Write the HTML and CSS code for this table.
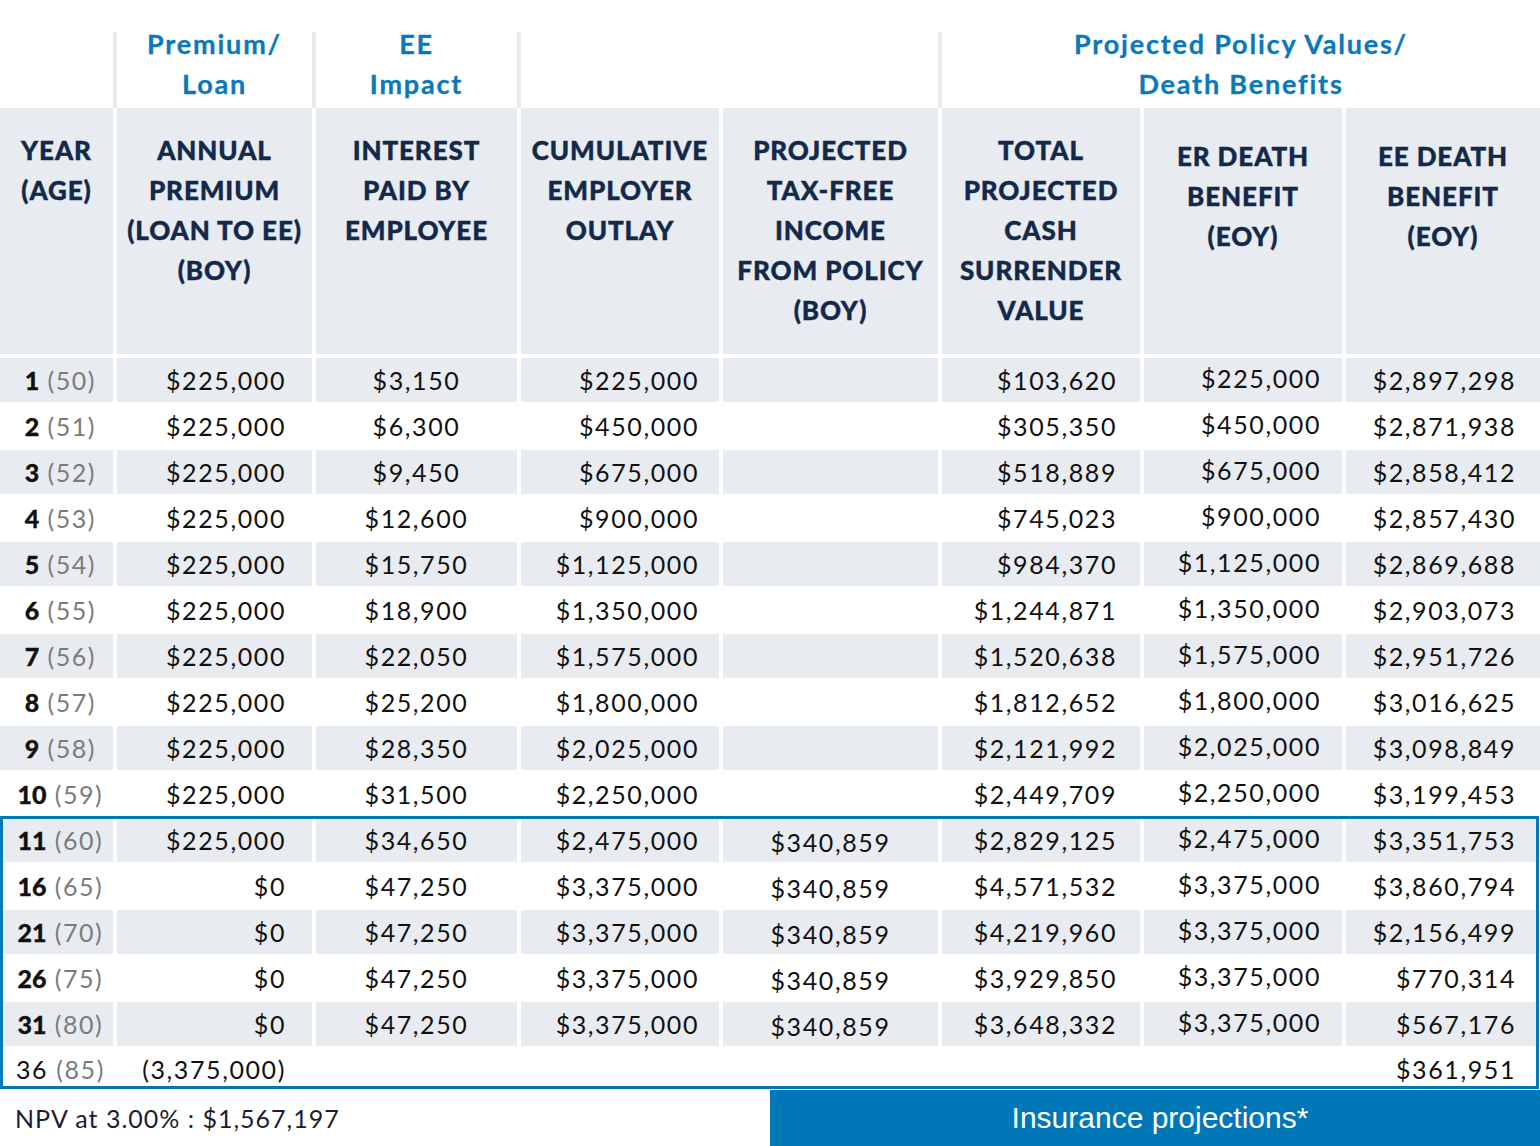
FILE: index.html
```html
<!DOCTYPE html>
<html lang="en">
<head>
<meta charset="utf-8">
<title>Insurance projections</title>
<link rel="stylesheet" href="styles.css">
</head>
<body>
<div class="sheet">
  <div class="grid group">
    <div class="gcell"></div>
    <div class="gcell"><span class="gtext">Premium/<br>Loan</span></div>
    <div class="gcell"><span class="gtext">EE<br>Impact</span></div>
    <div class="gcell span45"></div>
    <div class="gcell span68"><span class="gtext">Projected Policy Values/<br>Death Benefits</span></div>
  </div>
  <div class="grid head">
    <div class="hcell">YEAR<br>(AGE)</div>
    <div class="hcell">ANNUAL<br>PREMIUM<br>(LOAN TO EE)<br>(BOY)</div>
    <div class="hcell">INTEREST<br>PAID BY<br>EMPLOYEE</div>
    <div class="hcell">CUMULATIVE<br>EMPLOYER<br>OUTLAY</div>
    <div class="hcell">PROJECTED<br>TAX-FREE<br>INCOME<br>FROM POLICY<br>(BOY)</div>
    <div class="hcell">TOTAL<br>PROJECTED<br>CASH<br>SURRENDER<br>VALUE</div>
    <div class="hcell lower">ER DEATH<br>BENEFIT<br>(EOY)</div>
    <div class="hcell lower">EE DEATH<br>BENEFIT<br>(EOY)</div>
  </div>
  <div class="rows">
    <div class="grid row shade"><div class="c1"><b>1</b>&nbsp;<span class="age">(50)</span></div><div class="c2">$225,000</div><div class="c3">$3,150</div><div class="c4">$225,000</div><div class="c5"></div><div class="c6">$103,620</div><div class="c7">$225,000</div><div class="c8">$2,897,298</div></div>
    <div class="grid row"><div class="c1"><b>2</b>&nbsp;<span class="age">(51)</span></div><div class="c2">$225,000</div><div class="c3">$6,300</div><div class="c4">$450,000</div><div class="c5"></div><div class="c6">$305,350</div><div class="c7">$450,000</div><div class="c8">$2,871,938</div></div>
    <div class="grid row shade"><div class="c1"><b>3</b>&nbsp;<span class="age">(52)</span></div><div class="c2">$225,000</div><div class="c3">$9,450</div><div class="c4">$675,000</div><div class="c5"></div><div class="c6">$518,889</div><div class="c7">$675,000</div><div class="c8">$2,858,412</div></div>
    <div class="grid row"><div class="c1"><b>4</b>&nbsp;<span class="age">(53)</span></div><div class="c2">$225,000</div><div class="c3">$12,600</div><div class="c4">$900,000</div><div class="c5"></div><div class="c6">$745,023</div><div class="c7">$900,000</div><div class="c8">$2,857,430</div></div>
    <div class="grid row shade"><div class="c1"><b>5</b>&nbsp;<span class="age">(54)</span></div><div class="c2">$225,000</div><div class="c3">$15,750</div><div class="c4">$1,125,000</div><div class="c5"></div><div class="c6">$984,370</div><div class="c7">$1,125,000</div><div class="c8">$2,869,688</div></div>
    <div class="grid row"><div class="c1"><b>6</b>&nbsp;<span class="age">(55)</span></div><div class="c2">$225,000</div><div class="c3">$18,900</div><div class="c4">$1,350,000</div><div class="c5"></div><div class="c6">$1,244,871</div><div class="c7">$1,350,000</div><div class="c8">$2,903,073</div></div>
    <div class="grid row shade"><div class="c1"><b>7</b>&nbsp;<span class="age">(56)</span></div><div class="c2">$225,000</div><div class="c3">$22,050</div><div class="c4">$1,575,000</div><div class="c5"></div><div class="c6">$1,520,638</div><div class="c7">$1,575,000</div><div class="c8">$2,951,726</div></div>
    <div class="grid row"><div class="c1"><b>8</b>&nbsp;<span class="age">(57)</span></div><div class="c2">$225,000</div><div class="c3">$25,200</div><div class="c4">$1,800,000</div><div class="c5"></div><div class="c6">$1,812,652</div><div class="c7">$1,800,000</div><div class="c8">$3,016,625</div></div>
    <div class="grid row shade"><div class="c1"><b>9</b>&nbsp;<span class="age">(58)</span></div><div class="c2">$225,000</div><div class="c3">$28,350</div><div class="c4">$2,025,000</div><div class="c5"></div><div class="c6">$2,121,992</div><div class="c7">$2,025,000</div><div class="c8">$3,098,849</div></div>
    <div class="grid row"><div class="c1"><b>10</b>&nbsp;<span class="age">(59)</span></div><div class="c2">$225,000</div><div class="c3">$31,500</div><div class="c4">$2,250,000</div><div class="c5"></div><div class="c6">$2,449,709</div><div class="c7">$2,250,000</div><div class="c8">$3,199,453</div></div>
    <div class="boxed">
      <div class="grid row shade"><div class="c1"><b>11</b>&nbsp;<span class="age">(60)</span></div><div class="c2">$225,000</div><div class="c3">$34,650</div><div class="c4">$2,475,000</div><div class="c5">$340,859</div><div class="c6">$2,829,125</div><div class="c7">$2,475,000</div><div class="c8">$3,351,753</div></div>
      <div class="grid row"><div class="c1"><b>16</b>&nbsp;<span class="age">(65)</span></div><div class="c2">$0</div><div class="c3">$47,250</div><div class="c4">$3,375,000</div><div class="c5">$340,859</div><div class="c6">$4,571,532</div><div class="c7">$3,375,000</div><div class="c8">$3,860,794</div></div>
      <div class="grid row shade"><div class="c1"><b>21</b>&nbsp;<span class="age">(70)</span></div><div class="c2">$0</div><div class="c3">$47,250</div><div class="c4">$3,375,000</div><div class="c5">$340,859</div><div class="c6">$4,219,960</div><div class="c7">$3,375,000</div><div class="c8">$2,156,499</div></div>
      <div class="grid row"><div class="c1"><b>26</b>&nbsp;<span class="age">(75)</span></div><div class="c2">$0</div><div class="c3">$47,250</div><div class="c4">$3,375,000</div><div class="c5">$340,859</div><div class="c6">$3,929,850</div><div class="c7">$3,375,000</div><div class="c8">$770,314</div></div>
      <div class="grid row shade"><div class="c1"><b>31</b>&nbsp;<span class="age">(80)</span></div><div class="c2">$0</div><div class="c3">$47,250</div><div class="c4">$3,375,000</div><div class="c5">$340,859</div><div class="c6">$3,648,332</div><div class="c7">$3,375,000</div><div class="c8">$567,176</div></div>
      <div class="grid row last"><div class="c1">36&nbsp;<span class="age">(85)</span></div><div class="c2">(3,375,000)</div><div class="c3"></div><div class="c4"></div><div class="c5"></div><div class="c6"></div><div class="c7"></div><div class="c8">$361,951</div></div>
    </div>
  </div>
  <div class="foot">
    <div class="npv">NPV at 3.00% : $1,567,197</div>
    <div class="ins">Insurance projections*</div>
  </div>
</div>
</body>
</html>
```
FILE: styles.css
```css
html, body {
  margin: 0;
  padding: 0;
  background: #ffffff;
}
body {
  font-family: Lato, "Noto Sans", sans-serif;
  color: #111111;
}
.sheet {
  width: 1540px;
  overflow: hidden;
  height: 1146px;
}
.grid {
  display: grid;
  grid-template-columns: 113px 195px 201px 198px 215px 198px 198px 194px;
  column-gap: 4px;
}
/* group header */
.group {
  margin-top: 32px;
  height: 76px;
  background: #e8ebef;
}
.gcell {
  background: #ffffff;
  color: #0a79b9;
  font-weight: 700;
  font-size: 27px;
  line-height: 40px;
  text-align: center;
  letter-spacing: 1.8px;
  -webkit-text-stroke: 0.3px currentColor;
}
.gtext {
  display: block;
  margin-top: -8px;
}
.span45 { grid-column: 4 / span 2; }
.span68 { grid-column: 6 / span 3; }

/* column headers */
.head {
  height: 246px;
}
.hcell {
  background: #e8ebef;
  color: #13294b;
  font-weight: 900;
  font-size: 26px;
  line-height: 40px;
  text-align: center;
  padding-top: 22px;
  letter-spacing: 0.9px;
  white-space: nowrap;
  -webkit-text-stroke: 0.4px currentColor;
}
.hcell.lower {
  padding-top: 28px;
}

/* body rows */
.rows {
  margin-top: 4px;
  display: flex;
  flex-direction: column;
  gap: 2px;
}
.boxed {
  position: relative;
  display: flex;
  flex-direction: column;
  gap: 2px;
}
.boxed::after {
  content: "";
  position: absolute;
  top: -2px;
  left: 0;
  right: 1px;
  bottom: 1px;
  border: 3px solid #0077b6;
  pointer-events: none;
}
.row {
  height: 44px;
}
.row.last {
  height: 42px;
}
.row > div {
  display: flex;
  align-items: center;
  box-sizing: border-box;
  font-size: 25px;
  letter-spacing: 1.6px;
  white-space: nowrap;
  color: #111111;
}
.row.shade > div {
  background: #e8ebef;
}
.row b {
  font-weight: 900;
  letter-spacing: 0;
  -webkit-text-stroke: 0.3px currentColor;
}
.age {
  color: #7b7b7b;
}
.c1 { justify-content: center; padding-left: 8px; }
.c2 { justify-content: flex-end; padding-right: 26px; }
.c3 { justify-content: center; }
.c4 { justify-content: flex-end; padding-right: 20px; }
.c5 { justify-content: center; padding-top: 4px; }
.c6 { justify-content: flex-end; padding-right: 23px; }
.c7 { justify-content: flex-end; padding-right: 21px; padding-bottom: 4px; }
.c8 { justify-content: flex-end; padding-right: 24px; }

/* footer */
.foot {
  display: grid;
  grid-template-columns: 770px 770px;
  height: 56px;
}
.npv {
  display: flex;
  align-items: center;
  padding-left: 15px;
  font-size: 25px;
  letter-spacing: 1px;
  color: #1b1d33;
}
.ins {
  display: flex;
  align-items: center;
  justify-content: center;
  padding-left: 10px;
  background: #0077b6;
  color: #ffffff;
  font-family: "Liberation Sans", Arial, sans-serif;
  font-size: 30px;
}
```
